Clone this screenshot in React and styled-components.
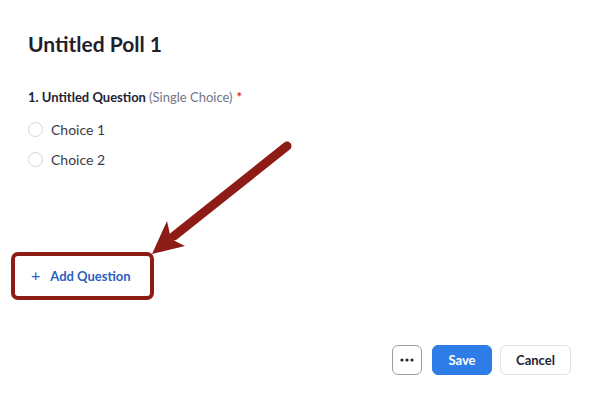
import React from "react";
import styled, { createGlobalStyle } from "styled-components";

const Global = createGlobalStyle`
  html, body { margin: 0; padding: 0; background: #fff; }
  body { font-family: Lato, "Open Sans", sans-serif; color: #232333; }
  * { box-sizing: border-box; }
`;

const Page = styled.div`
  position: relative;
  width: 600px;
  height: 403px;
  overflow: hidden;
  display: flex;
  flex-direction: column;
  padding: 30px 29px 0 28px;
`;

const Title = styled.h1`
  margin: 0;
  font-size: 21px;
  line-height: 28px;
  font-weight: 700;
  color: #1f1f2b;
`;

const Question = styled.div`
  margin-top: 30px;
  font-size: 13px;
  line-height: 18px;
  font-weight: 700;
  color: #232333;
`;

const Hint = styled.span`
  font-weight: 400;
  color: #747487;
`;

const Required = styled.span`
  color: #e02828;
  font-weight: 700;
  margin-left: 4px;
`;

const Choices = styled.div`
  margin-top: 8px;
  display: flex;
  flex-direction: column;
`;

const ChoiceRow = styled.label`
  height: 30px;
  display: flex;
  align-items: center;
  gap: 8px;
  font-size: 14px;
  color: #3a3a4a;
`;

const Radio = styled.span`
  width: 15px;
  height: 15px;
  border-radius: 50%;
  border: 1px solid #d6d6dc;
  background: #fff;
`;

const Highlight = styled.div`
  margin-top: 78px;
  margin-left: -17px;
  width: 143px;
  height: 48px;
  border: 4px solid #8e1c16;
  border-radius: 7px;
  display: flex;
  align-items: center;
`;

const AddButton = styled.button`
  border: none;
  background: transparent;
  padding: 0 0 0 16px;
  display: flex;
  align-items: center;
  gap: 10px;
  font-family: Lato, sans-serif;
  font-size: 13px;
  font-weight: 700;
  color: #2b5fbd;
  cursor: pointer;
`;

const Plus = styled.span`
  font-size: 16px;
  font-weight: 400;
  line-height: 1;
  margin-top: -2px;
`;

const Footer = styled.div`
  margin-top: 45px;
  display: flex;
  justify-content: flex-end;
  gap: 8px;
`;

const Btn = styled.button`
  height: 30px;
  border-radius: 6px;
  font-family: Lato, sans-serif;
  font-size: 13px;
  font-weight: 700;
  display: flex;
  align-items: center;
  justify-content: center;
  padding: 0;
  width: ${(p) => p.$w}px;
  margin-right: ${(p) => p.$mr || 0}px;
  border: 1px solid ${(p) => (p.$variant === "primary" ? "#2d7ce8" : p.$variant === "more" ? "#9c9ca8" : "#e3e3e8")};
  background: ${(p) => (p.$variant === "primary" ? "#2d7ce8" : "#fff")};
  color: ${(p) => (p.$variant === "primary" ? "#fff" : "#232333")};
`;

const ArrowLayer = styled.svg`
  position: absolute;
  left: 0;
  top: 0;
  pointer-events: none;
`;

export default function App() {
  return (
    <>
      <Global />
      <Page>
        <Title>Untitled Poll 1</Title>
        <Question>
          1. Untitled Question <Hint>(Single Choice)</Hint>
          <Required>*</Required>
        </Question>
        <Choices>
          <ChoiceRow>
            <Radio />
            Choice 1
          </ChoiceRow>
          <ChoiceRow>
            <Radio />
            Choice 2
          </ChoiceRow>
        </Choices>
        <Highlight>
          <AddButton>
            <Plus>+</Plus>
            Add Question
          </AddButton>
        </Highlight>
        <Footer>
          <Btn $variant="more" $w={30} $mr={2}>
            <svg width="14" height="4" viewBox="0 0 14 4">
              <circle cx="2" cy="2" r="1.6" fill="#232333" />
              <circle cx="7" cy="2" r="1.6" fill="#232333" />
              <circle cx="12" cy="2" r="1.6" fill="#232333" />
            </svg>
          </Btn>
          <Btn $variant="primary" $w={60}>Save</Btn>
          <Btn $variant="default" $w={71}>Cancel</Btn>
        </Footer>
        <ArrowLayer width="600" height="403" viewBox="0 0 600 403">
          <line x1="287" y1="146" x2="174" y2="236" stroke="#8e1c16" strokeWidth="9" strokeLinecap="round" />
          <polygon points="152,254 167,221 171,239 185,246" fill="#8e1c16" />
        </ArrowLayer>
      </Page>
    </>
  );
}
